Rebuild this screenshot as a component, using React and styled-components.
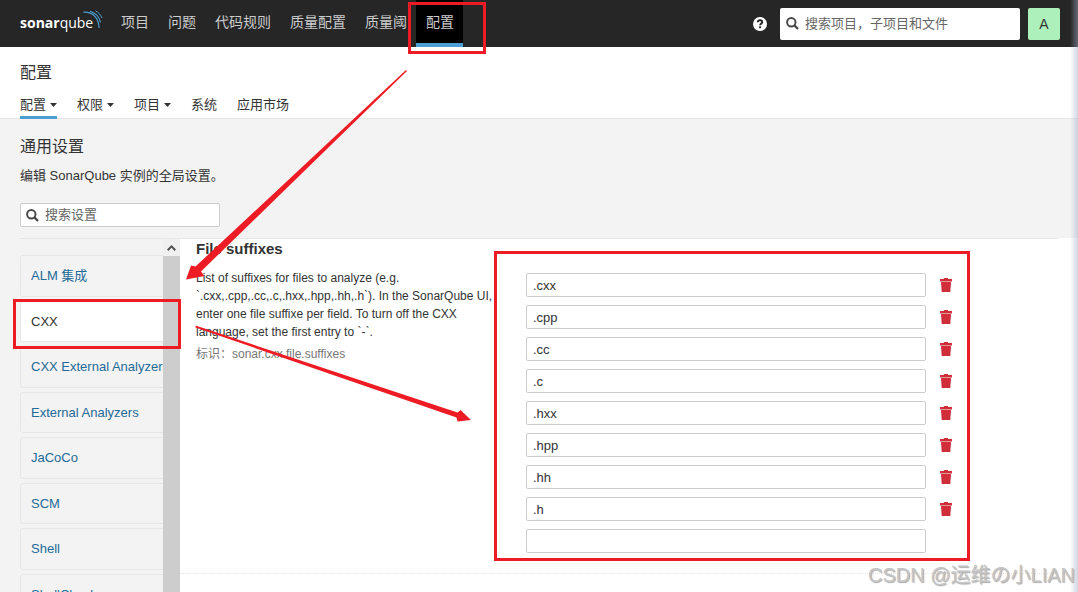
import React, { useState } from 'react';
import styled, { createGlobalStyle } from "styled-components";

const navLinks = ['项目', '问题', '代码规则', '质量配置', '质量阈', '配置'];

const adminTabs = [
  { label: '配置', menu: true, active: true },
  { label: '权限', menu: true },
  { label: '项目', menu: true },
  { label: '系统' },
  { label: '应用市场' },
];

const categories = ['ALM 集成', 'CXX', 'CXX External Analyzers', 'External Analyzers', 'JaCoCo', 'SCM', 'Shell', 'ShellCheck'];

function SearchIcon() {
  return (
    <svg width="13" height="13" viewBox="0 0 13 13" fill="none" stroke="#4b4b4b" strokeWidth="2">
      <circle cx="5.3" cy="5.3" r="4.2" />
      <path d="M8.4 8.4L12 12" strokeWidth="2.4" />
    </svg>
  )
}

function TrashIcon() {
  return (
    <svg width="12" height="14" viewBox="0 0 12 14" fill="#d02f3a">
      <path d="M4 0h4v1h4v2H0V1h4z" />
      <path d="M0 3h12v1H0z" opacity="0.5" />
      <path d="M1 4h10l-0.7 10H1.7z" />
    </svg>
  )
}

function Logo() {
  return (
    <LogoLink href="#" aria-label="sonarqube">
      <LogoText><b>sonar</b>qube</LogoText>
      <svg width="20" height="19" viewBox="0 0 20 19" fill="none" stroke="#4b9fd5">
        <path d="M0.5 2.2C9.5 1.5 16 8 16 18" strokeWidth="1.3" />
        <path d="M7 1.3C12.5 3 16.3 7 17.6 12.5" strokeWidth="1.1" />
        <path d="M12.5 0.8C15.5 2.5 17.6 4.8 19 8" strokeWidth="1" />
      </svg>
    </LogoLink>
  )
}

function App() {
  const [category, setCategory] = useState('CXX');
  const [suffixes, setSuffixes] = useState(['.cxx', '.cpp', '.cc', '.c', '.hxx', '.hpp', '.hh', '.h']);

  const changeSuffix = (index, value) => {
    const next = [...suffixes];
    next[index] = value;
    setSuffixes(next);
  }

  return (
    <Page>
      <GlobalStyle />
      <Navbar>
        <Logo />
        <NavList>
          {navLinks.map(label => (
            <NavLink href="#" key={label} $active={label === '配置'}>{label}</NavLink>
          ))}
        </NavList>
        <NavRight>
          <HelpButton aria-label="帮助">
            <svg width="14" height="14" viewBox="0 0 14 14">
              <circle cx="7" cy="7" r="7" fill="#fff" />
              <path d="M4.7 5.3C4.8 3.7 5.8 3.2 7 3.2c1.3 0 2.3.7 2.3 1.9 0 1.6-2.2 1.5-2.2 3.2" fill="none" stroke="#262626" strokeWidth="1.9" />
              <path d="M6.1 9.3h2v1.9h-2z" fill="#262626" />
            </svg>
          </HelpButton>
          <GlobalSearch>
            <SearchIcon />
            <input aria-label="搜索" placeholder="搜索项目，子项目和文件" />
          </GlobalSearch>
          <Avatar>A</Avatar>
        </NavRight>
      </Navbar>

      <AdminHeader>
        <Title>配置</Title>
        <Tabs>
          {adminTabs.map(tab => (
            <Tab href="#" key={tab.label} $active={tab.active}>
              {tab.label}
              {tab.menu && <svg width="7" height="4" viewBox="0 0 7 4"><path d="M0 0h7L3.5 4z" fill="#333" /></svg>}
            </Tab>
          ))}
        </Tabs>
      </AdminHeader>

      <SettingsHeader>
        <Title>通用设置</Title>
        <p>编辑 SonarQube 实例的全局设置。</p>
        <SettingsSearch>
          <SearchIcon />
          <input aria-label="搜索设置" placeholder="搜索设置" />
        </SettingsSearch>
      </SettingsHeader>

      <Body>
        <Sidebar>
          <CategoryList>
            {categories.map(name => (
              <Category key={name} $active={name === category} onClick={() => setCategory(name)}>{name}</Category>
            ))}
          </CategoryList>
          <ScrollTrack>
            <ScrollUp aria-label="向上滚动">
              <svg width="9" height="6" viewBox="0 0 9 6" fill="none" stroke="#505050" strokeWidth="2"><path d="M0.7 5.2L4.5 1.4l3.8 3.8" /></svg>
            </ScrollUp>
          </ScrollTrack>
        </Sidebar>
        <Settings>
          <Definition>
            <Description>
              <h3>File suffixes</h3>
              <p>List of suffixes for files to analyze (e.g. `.cxx,.cpp,.cc,.c,.hxx,.hpp,.hh,.h`). In the SonarQube UI, enter one file suffixe per field. To turn off the CXX language, set the first entry to `-`.</p>
              <small>标识：sonar.cxx.file.suffixes</small>
            </Description>
            <Fields>
              {[...suffixes, ''].map((value, i) => (
                <FieldRow key={i}>
                  <FieldInput aria-label={`File suffix ${i + 1}`} value={value} onChange={e => changeSuffix(i, e.target.value)} />
                  {i < suffixes.length && (
                    <DeleteButton aria-label="删除" onClick={() => setSuffixes(suffixes.filter((_, n) => n !== i))}>
                      <TrashIcon />
                    </DeleteButton>
                  )}
                </FieldRow>
              ))}
            </Fields>
          </Definition>
        </Settings>
      </Body>

      <EdgeShade />
      <Annotations width="1078" height="592" viewBox="0 0 1078 592">
        <g fill="none" stroke="#ed1c24" strokeWidth="3">
          <path d="M409.5 3.500h75v49h-75z" />
          <path d="M14.5 300.5h165v47h-165z" />
          <path d="M495.5 252.5h473v307h-473z" />
        </g>
        <g fill="#ed1c24">
          <path d="M406 70L195.5 266.5L191 265.5L186 279.5L204.5 276L201 271.5L407 71z" />
          <path d="M195.500 325.500L457.500 412.500L460.500 410L471 420L457.500 421.500L456.500 417.500L195.500 327.500z" />
        </g>
      </Annotations>
      <Watermark>CSDN @运维の小LIAN</Watermark>
    </Page>
  )
}

export default App;


const GlobalStyle = createGlobalStyle`
  * {
    box-sizing: border-box;
  }

  body {
    margin: 0;
    color: #333;
    background: #fff;
    font: 13px/18px "Liberation Sans", "Noto Sans CJK SC", sans-serif;
  }

  h1, h3, p {
    margin: 0;
  }

  a {
    color: inherit;
    text-decoration: none;
  }

  button, input {
    font: inherit;
    color: inherit;
  }

  button {
    padding: 0;
    border: 0;
    background: none;
    cursor: pointer;
  }
`;

const Page = styled.div`
  position: relative;
  display: flex;
  flex-direction: column;
  height: 100vh;
  overflow: hidden;
`;

const Navbar = styled.header`
  display: flex;
  flex: none;
  height: 47px;
  padding: 0 18px 0 20px;
  background: #262626;
`;

const LogoLink = styled.a`
  display: flex;
  width: 91px;
  padding-top: 10px;
  color: #fff;

  > svg {
    flex: none;
    margin-left: -10px;
  }
`;

const LogoText = styled.span`
  padding-top: 3px;
  font: 14px/20px "Open Sans", sans-serif;
`;

const NavList = styled.nav`
  display: flex;
`;

const NavLink = styled.a`
  padding: 0 9px 0 10px;
  border-bottom: 4px solid ${p => p.$active ? '#4b9fd5' : 'transparent'};
  background: ${p => p.$active ? '#000' : 'transparent'};
  color: #ccc;
  font-size: 14px;
  line-height: 45px;
  white-space: nowrap;
`;

const NavRight = styled.div`
  display: flex;
  align-items: center;
  gap: 8px;
  margin-left: auto;
`;

const HelpButton = styled.button`
  display: flex;
  margin-right: 5px;
`;

const SearchBox = styled.label`
  display: flex;
  align-items: center;
  gap: 6px;
  padding-left: 6px;
  border-radius: 2px;
  background: #fff;

  > svg {
    flex: none;
  }

  > input {
    min-width: 0;
    flex: 1;
    padding: 0;
    border: 0;
    outline: 0;
    background: none;
  }

  > input::placeholder {
    color: #666;
    opacity: 1;
  }
`;

const GlobalSearch = styled(SearchBox)`
  width: 240px;
  height: 32px;
`;

const SettingsSearch = styled(SearchBox)`
  width: 200px;
  height: 24px;
  margin-top: 18px;
  padding-left: 5px;
  border: 1px solid #ccc;
`;

const Avatar = styled.button`
  width: 32px;
  height: 32px;
  border-radius: 2px;
  background: #aef0bc;
  font-size: 14px;
`;

const Title = styled.h1`
  font-size: 16px;
  line-height: 24px;
  font-weight: 400;
`;

/* the active tab's underline sits on top of the border below */
const AdminHeader = styled.div`
  position: relative;
  z-index: 1;
  flex: none;
  margin-bottom: -1px;
  padding: 14px 20px 0;
`;

const Tabs = styled.nav`
  display: flex;
  gap: 20px;
  margin-top: 9px;
`;

const Tab = styled.a`
  display: flex;
  align-items: center;
  gap: 4px;
  height: 25px;
  border-bottom: 3px solid ${p => p.$active ? '#4b9fd5' : 'transparent'};
  white-space: nowrap;
`;

const SettingsHeader = styled.div`
  flex: none;
  padding: 16px 20px 11px;
  border-top: 1px solid #e6e6e6;
  background: #f3f3f3;

  > p {
    margin-top: 8px;
  }
`;

const Body = styled.main`
  display: flex;
  flex: 1;
  min-height: 0;
  padding-left: 20px;
  background: #f3f3f3;
`;

const Sidebar = styled.aside`
  display: flex;
  flex: none;
  width: 160px;
  border-top: 1px solid #e6e6e6;
`;

const CategoryList = styled.div`
  display: grid;
  flex: 1;
  grid-template-columns: 160px;
  grid-auto-rows: 42px 41px;
  gap: 4px;
  padding-top: 16px;
  overflow: hidden;
`;

const Category = styled.button`
  padding: 0 10px;
  border: 1px solid #e6e6e6;
  border-radius: 3px;
  background: ${p => p.$active ? '#fff' : '#f3f3f3'};
  color: ${p => p.$active ? '#333' : '#236a97'};
  text-align: left;
  white-space: nowrap;
`;

const ScrollTrack = styled.div`
  width: 17px;
  background: #cdcdcd;
`;

const ScrollUp = styled.button`
  display: grid;
  place-items: center;
  width: 17px;
  height: 17px;
  background: #f0f0f0;
`;

const Settings = styled.section`
  flex: 1;
  padding-right: 20px;
  background: #fff;
  overflow: hidden;
`;

const Definition = styled.div`
  display: flex;
  gap: 30px;
  padding: 0 0 20px 16px;
  border-top: 1px solid #e6e6e6;
  border-bottom: 1px dotted #e6e6e6;
`;

const Description = styled.div`
  flex: none;
  width: 300px;
  font-size: 12px;

  > h3 {
    font-size: 15px;
    line-height: 20px;
  }

  > p {
    margin-top: 10px;
  }

  > small {
    display: block;
    margin-top: 4px;
    color: #777;
    font-size: 12px;
  }
`;

const Fields = styled.div`
  display: flex;
  flex: 1;
  flex-direction: column;
  gap: 8px;
  padding-top: 34px;
`;

const FieldRow = styled.div`
  display: flex;
  align-items: center;
  gap: 14px;
`;

const FieldInput = styled.input`
  width: 400px;
  height: 24px;
  padding: 0 6px;
  border: 1px solid #ccc;
  border-radius: 2px;
  background: #fff;
`;

const DeleteButton = styled.button`
  display: flex;
`;

/* everything below floats over the page */
const EdgeShade = styled.div`
  position: absolute;
  top: 0;
  right: 0;
  bottom: 0;
  width: 8px;
  background: linear-gradient(to right, rgba(160, 175, 200, 0), rgba(160, 175, 200, 0.5));
  pointer-events: none;
`;

const Annotations = styled.svg`
  position: absolute;
  top: 0;
  left: 0;
  z-index: 2;
  pointer-events: none;
`;

const Watermark = styled.div`
  position: absolute;
  right: 3px;
  bottom: 4px;
  color: #c4c4c4;
  font-size: 20px;
  line-height: 26px;
  text-shadow: 1px 1px 1px #aaa;
  white-space: nowrap;
  pointer-events: none;
`;
